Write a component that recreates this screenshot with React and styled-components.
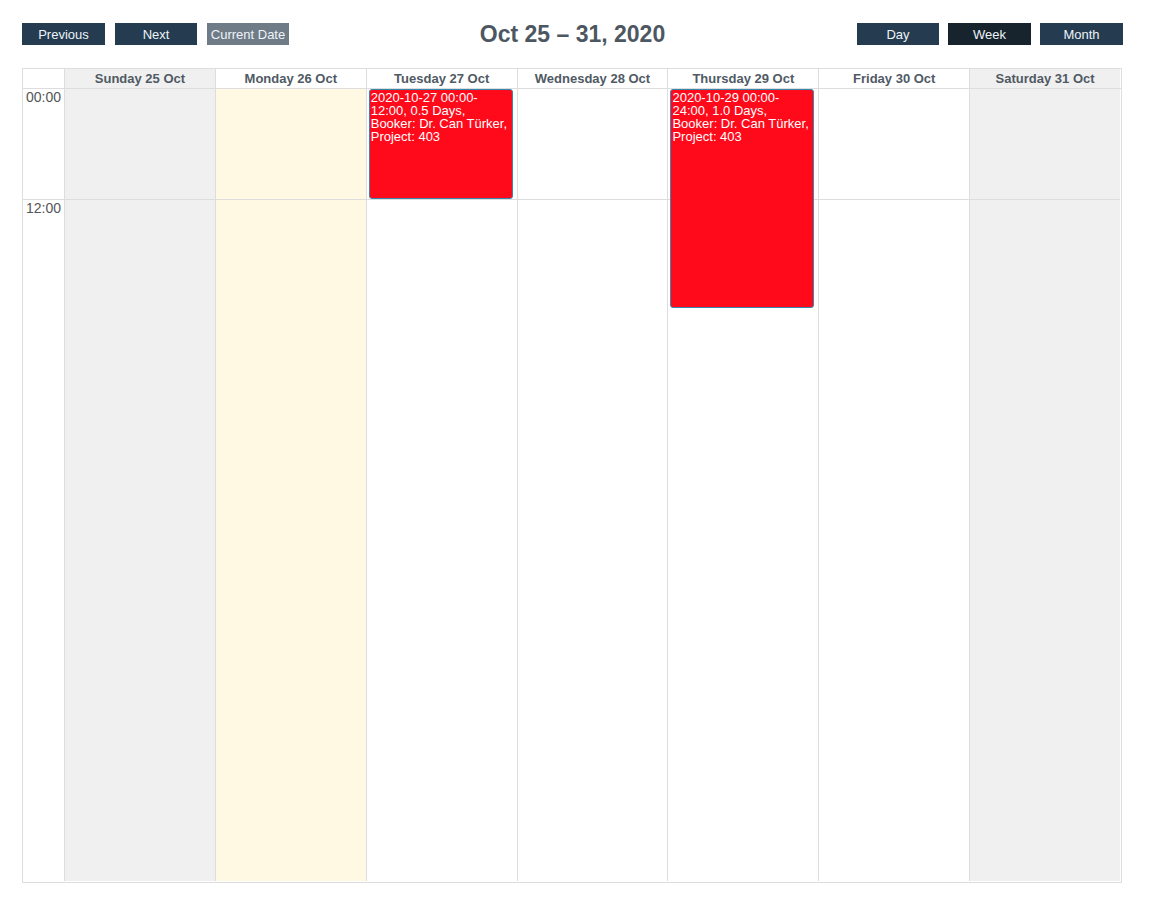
import styled, { createGlobalStyle } from "styled-components";

const GlobalStyle = createGlobalStyle`
  body {
    margin: 0;
    background: #fff;
    font-family: "Liberation Sans", Arial, sans-serif;
    font-size: 13px;
  }
`;

const Page = styled.div`
  padding: 23px 0 0 22px;
  width: 1100px;
`;

const Toolbar = styled.div`
  display: grid;
  grid-template-columns: 1fr auto 1fr;
  align-items: center;
  height: 22px;
  margin-right: -1px;
`;

const ButtonGroup = styled.div`
  display: flex;
  gap: ${(p) => (p.$right ? 9 : 10)}px;
  justify-content: ${(p) => (p.$right ? "flex-end" : "flex-start")};
`;

const NavButton = styled.button`
  width: ${(p) => p.$width || 82}px;
  height: 22px;
  padding: 1px 0 0;
  border: none;
  border-radius: 0;
  background: ${(p) =>
    p.$muted ? "#6f7b87" : p.$active ? "#17232d" : "#243b50"};
  color: #edf3f8;
  font-family: "Liberation Sans", Arial, sans-serif;
  font-size: 13px;
  line-height: 21px;
  cursor: pointer;
`;

const Title = styled.h2`
  margin: 0;
  font-size: 23px;
  font-weight: 700;
  color: #4d5761;
  line-height: 22px;
`;

const Calendar = styled.div`
  margin-top: 23px;
  border: 1px solid #ddd;
`;

const HeaderRow = styled.div`
  display: flex;
  height: 19px;
  border-bottom: 1px solid #ddd;
  padding-right: 1px;
`;

const Gutter = styled.div`
  width: 41px;
  flex: none;
`;

const HeaderCell = styled.div`
  flex: 1;
  border-left: 1px solid #ddd;
  background: ${(p) => (p.$weekend ? "#f0f0f0" : "#fff")};
  color: #505a64;
  font-weight: 700;
  font-size: 13px;
  line-height: 19px;
  text-align: center;
  white-space: nowrap;
`;

const Body = styled.div`
  display: flex;
  padding: 0 1px 1px 0;
`;

const TimeGutter = styled.div`
  width: 41px;
  flex: none;
  display: flex;
  flex-direction: column;
`;

const Slot = styled.div`
  height: ${(p) => p.$height}px;
  border-bottom: ${(p) => (p.$last ? "none" : "1px solid #ddd")};
`;

const TimeLabel = styled(Slot)`
  color: #555;
  font-size: 14px;
  line-height: 16px;
  padding: 0 3px 0 0;
  text-align: right;
  box-sizing: border-box;
`;

const DayColumn = styled.div`
  flex: 1;
  position: relative;
  border-left: 1px solid #ddd;
  background: ${(p) =>
    p.$today ? "#fff9e3" : p.$weekend ? "#f0f0f0" : "#fff"};
`;

const Event = styled.div`
  position: absolute;
  top: 0;
  left: 2px;
  right: 4px;
  box-sizing: border-box;
  height: ${(p) => p.$height}px;
  background: #ff0a1b;
  border: 1px solid #3a87ad;
  border-radius: 3px;
  color: #fff;
  font-size: 13px;
  line-height: 13px;
  padding: 1px 1px 0 1px;
  overflow: hidden;
`;

const days = [
  { label: "Sunday 25 Oct", weekend: true },
  { label: "Monday 26 Oct", today: true },
  {
    label: "Tuesday 27 Oct",
    event: {
      text: "2020-10-27 00:00-12:00, 0.5 Days, Booker: Dr. Can Türker, Project: 403",
      height: 110,
    },
  },
  { label: "Wednesday 28 Oct" },
  {
    label: "Thursday 29 Oct",
    event: {
      text: "2020-10-29 00:00-24:00, 1.0 Days, Booker: Dr. Can Türker, Project: 403",
      height: 219,
    },
  },
  { label: "Friday 30 Oct" },
  { label: "Saturday 31 Oct", weekend: true },
];

const FIRST_SLOT = 110;
const SECOND_SLOT = 681;

function App() {
  return (
    <Page>
      <GlobalStyle />
      <Toolbar>
        <ButtonGroup>
          <NavButton $width={83}>Previous</NavButton>
          <NavButton>Next</NavButton>
          <NavButton $muted>Current Date</NavButton>
        </ButtonGroup>
        <Title>Oct 25 – 31, 2020</Title>
        <ButtonGroup $right>
          <NavButton>Day</NavButton>
          <NavButton $width={83} $active>
            Week
          </NavButton>
          <NavButton $width={83}>Month</NavButton>
        </ButtonGroup>
      </Toolbar>

      <Calendar>
        <HeaderRow>
          <Gutter />
          {days.map((d) => (
            <HeaderCell key={d.label} $weekend={d.weekend}>
              {d.label}
            </HeaderCell>
          ))}
        </HeaderRow>
        <Body>
          <TimeGutter>
            <TimeLabel $height={FIRST_SLOT + 1}>00:00</TimeLabel>
            <TimeLabel $height={SECOND_SLOT} $last>
              12:00
            </TimeLabel>
          </TimeGutter>
          {days.map((d) => (
            <DayColumn key={d.label} $weekend={d.weekend} $today={d.today}>
              <Slot $height={FIRST_SLOT} />
              <Slot $height={SECOND_SLOT} $last />
              {d.event && (
                <Event $height={d.event.height}>{d.event.text}</Event>
              )}
            </DayColumn>
          ))}
        </Body>
      </Calendar>
    </Page>
  );
}

export default App;
